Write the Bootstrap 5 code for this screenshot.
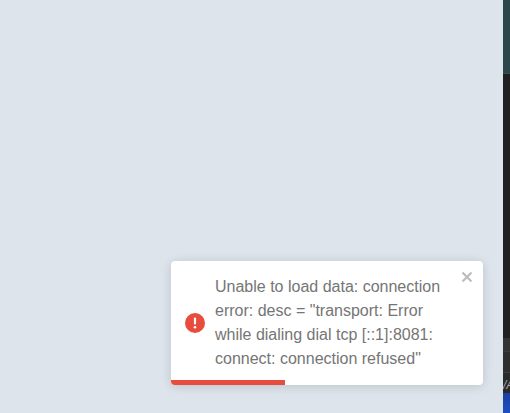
<!DOCTYPE html>
<html lang="en">
<head>
<meta charset="utf-8">
<title>Error</title>
<link rel="stylesheet" href="https://cdn.jsdelivr.net/npm/bootstrap@5.3.0/dist/css/bootstrap.min.css">
<style>
html,body{height:413px;overflow:hidden;margin:0}
body{background:#dde4ec;font-family:"Liberation Sans",Arial,sans-serif}
.page-wrap{height:413px}
.canvas-area{width:503px;background:#dde4ec}
.side-strip{width:7px}
.strip-teal{height:74px;background:#2c474c;border-bottom:1px solid #3a4f52}
.strip-dark{height:264px;background:#202020}
.strip-row{height:14px;background:#333;border-bottom:1px solid #3c3c3c}
.strip-row2{height:21px;background:#2e2e2e;border-bottom:1px solid #3c3c3c}
.strip-path{height:20px;background:#2a2a2a;color:#aaa;font-size:12px;line-height:24px;white-space:nowrap;overflow:hidden;font-style:italic}
.strip-blue{flex:1;background:linear-gradient(#1a3fa0,#1c4fc4)}
.toast-box{position:absolute;left:171px;top:261px;width:312px;height:124px;background:#fff;border-radius:4px;box-shadow:0 1px 10px rgba(0,0,0,.1),0 2px 15px rgba(0,0,0,.05);overflow:hidden;color:#757575;font-size:16px;line-height:24px}
.toast-body-row{height:110px;padding:14px 24px 0 14px;gap:10px}
.toast-text{width:240px;margin:0}
.toast-close{position:absolute;top:9px;right:9px;width:14px;height:14px;padding:0;border:0;background:none;line-height:0}
.toast-progress{position:absolute;left:0;bottom:0;height:5px;background:#e74c3c}
</style>
</head>
<body>
<div class="page-wrap d-flex">
  <div class="canvas-area"></div>
  <div class="side-strip d-flex flex-column">
    <div class="strip-teal"></div>
    <div class="strip-dark"></div>
    <div class="strip-row"></div>
    <div class="strip-row2"></div>
    <div class="strip-path">/A</div>
    <div class="strip-blue"></div>
  </div>
</div>
<div class="toast-box" role="alert">
  <div class="toast-body-row d-flex align-items-center">
    <svg class="flex-shrink-0" width="20" height="20" viewBox="0 0 20 20" aria-hidden="true"><circle cx="10" cy="10" r="10" fill="#e74c3c"/><rect x="8.9" y="4.6" width="2.2" height="7" rx="1" fill="#fff"/><circle cx="10" cy="14.2" r="1.3" fill="#fff"/></svg>
    <p class="toast-text">Unable to load data: connection error: desc = "transport: Error while dialing dial tcp [::1]:8081: connect: connection refused"</p>
  </div>
  <button class="toast-close" type="button" aria-label="Close"><svg width="14" height="14" viewBox="0 0 14 14"><path d="M2.5 2.5l9 9M11.5 2.5l-9 9" stroke="#bdbdbd" stroke-width="2.2"/></svg></button>
  <div class="toast-progress" style="width:114px"></div>
</div>
<script src="https://cdn.jsdelivr.net/npm/bootstrap@5.3.0/dist/js/bootstrap.bundle.min.js"></script>
</body>
</html>
